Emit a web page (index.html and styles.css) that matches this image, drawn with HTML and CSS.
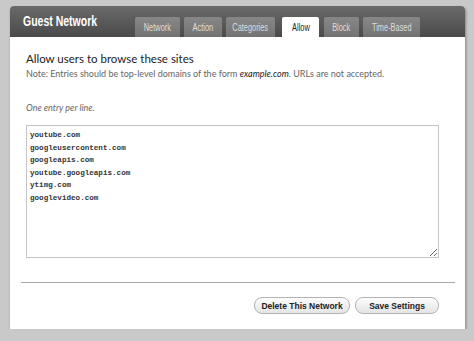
FILE: index.html
```html
<!DOCTYPE html>
<html lang="en">

<head>
  <meta charset="UTF-8">
  <meta name="viewport" content="width=device-width, initial-scale=1.0">
  <title>Guest Network</title>
  <link rel="stylesheet" href="styles.css">
</head>

<body>
  <div class="panel">
    <div class="header">
      <h1><span>Guest Network</span></h1>
      <ul class="tabs">
        <li class="tab-network"><span>Network</span></li>
        <li class="tab-action"><span>Action</span></li>
        <li class="tab-categories"><span>Categories</span></li>
        <li class="tab-allow active"><span>Allow</span></li>
        <li class="tab-block"><span>Block</span></li>
        <li class="tab-time"><span>Time-Based</span></li>
      </ul>
    </div>

    <div class="content">
      <h2>Allow users to browse these sites</h2>
      <p class="note">Note: Entries should be top-level domains of the form <em>example.com</em>. URLs are not accepted.</p>
      <p class="hint">One entry per line.</p>
      <textarea class="entries">youtube.com
googleusercontent.com
googleapis.com
youtube.googleapis.com
ytimg.com
googlevideo.com</textarea>
    </div>

    <div class="actions">
      <button class="btn btn-delete">Delete This Network</button>
      <button class="btn btn-save">Save Settings</button>
    </div>
  </div>
</body>

</html>
```

FILE: styles.css
```css
body {
  margin: 0;
  padding: 6px 9px 0 10px;
  background-color: #c9c9c9;
  font-family: Lato, "Open Sans", sans-serif;
}

.panel {
  background-color: #fff;
  border-radius: 4px 4px 0 0;
  box-shadow: 1px 2px 3px rgba(0, 0, 0, 0.35);
  height: 323px;
  display: flex;
  flex-direction: column;
}

.header {
  height: 31px;
  display: flex;
  align-items: flex-end;
  justify-content: space-between;
  background: linear-gradient(#6a6a6a, #4a4a4a);
  border-radius: 4px 4px 0 0;
  padding: 0 0 0 13px;
}

.header h1 {
  margin: 0;
  align-self: center;
  padding-bottom: 2px;
  width: 80px;
  white-space: nowrap;
  color: #fff;
  font-family: "Liberation Sans", sans-serif;
  font-size: 14px;
  font-weight: bold;
}

.header h1 span {
  display: inline-block;
  transform: scaleX(0.75);
  transform-origin: left center;
}

.tabs {
  list-style: none;
  margin: 0 45px 0 0;
  padding: 0;
  display: flex;
  gap: 4px;
}

.tabs li {
  box-sizing: border-box;
  height: 20px;
  line-height: 21px;
  background: linear-gradient(#878787, #737373);
  border-radius: 2px 2px 0 0;
  color: #dedede;
  font-family: "Liberation Sans", sans-serif;
  font-size: 10px;
  text-align: center;
  white-space: nowrap;
  overflow: hidden;
}

.tabs li span {
  display: inline-block;
  transform: scaleX(0.74);
}

.tab-network { width: 45px; }
.tab-action { width: 38px; }
.tab-categories { width: 49px; margin-right: 3px; }
.tab-allow { width: 37px; }
.tab-block { width: 35px; margin-left: 1px; }
.tab-time { width: 57px; }

.tabs li.active {
  background: #fff;
  color: #222;
}

.content {
  padding: 14px 0 0 16px;
}

.content h2 {
  margin: 0;
  font-size: 11.5px;
  font-weight: normal;
  color: #222;
  line-height: 16px;
}

.note {
  margin: 0;
  font-size: 9px;
  color: #666;
  line-height: 13px;
}

.note em {
  color: #222;
}

.hint {
  margin: 21px 0 0;
  font-size: 9px;
  font-style: italic;
  color: #666;
  line-height: 13px;
}

.entries {
  display: block;
  box-sizing: border-box;
  width: 413px;
  height: 133px;
  margin-top: 11px;
  padding: 3px 3px;
  border: 1px solid #c4c4c4;
  font-family: "Liberation Mono", monospace;
  font-size: 7.6px;
  font-weight: bold;
  line-height: 12.6px;
  color: #333;
  resize: vertical;
}

.actions {
  margin: 24px 10px 0 11px;
  padding-top: 14px;
  border-top: 1px solid #a9a9a9;
  display: flex;
  justify-content: flex-end;
  gap: 5px;
  padding-right: 16px;
}

.btn {
  height: 17px;
  padding: 0;
  border: 1px solid #b3b3b3;
  border-radius: 8px;
  background: linear-gradient(#fdfdfd, #e4e4e4);
  font-family: "Liberation Sans", sans-serif;
  font-size: 8.5px;
  font-weight: bold;
  color: #222;
}

.btn-delete {
  width: 96px;
}

.btn-save {
  width: 84px;
}
```
